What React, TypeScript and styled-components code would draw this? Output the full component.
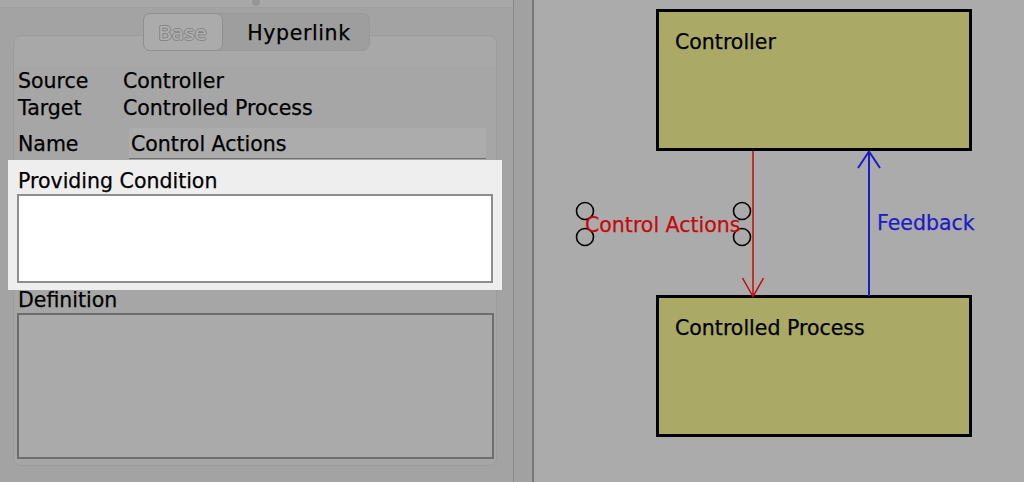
import React from 'react';
import styled, { createGlobalStyle } from 'styled-components';

const GlobalStyle = createGlobalStyle`
  html, body {
    margin: 0;
    padding: 0;
    background: #a3a3a3;
  }
  body {
    font-family: "DejaVu Sans", "Liberation Sans", sans-serif;
    font-size: 20.5px;
    color: #000;
    -webkit-text-stroke: 0.25px currentColor;
  }
`;

const Window = styled.div`
  display: flex;
  width: 1024px;
  height: 482px;
  overflow: hidden;
`;

const Inspector = styled.div`
  width: 513px;
  display: flex;
  flex-direction: column;
  background: #a3a3a3;
`;

const TopStrip = styled.div`
  height: 7px;
  background: #a8a8a8;
  border-bottom: 1px solid #9e9e9e;
  display: flex;
  justify-content: center;
  overflow: hidden;
`;

const Grip = styled.div`
  width: 8px;
  height: 8px;
  margin-top: -2px;
  margin-left: -2px;
  border-radius: 50%;
  background: #979797;
`;

const TabRow = styled.div`
  display: flex;
  justify-content: center;
  margin-top: 5px;
  margin-bottom: -16px;
  position: relative;
  z-index: 1;
`;

const Segmented = styled.div`
  display: flex;
  height: 38px;
  width: 227px;
  margin-left: -1px;
  border-radius: 8px;
  background: #9e9e9e;
  box-shadow: inset 0 0 0 1px #999;
`;

const Segment = styled.div<{ $selected?: boolean }>`
  display: flex;
  align-items: center;
  justify-content: center;
  height: 100%;
  box-sizing: border-box;
  width: ${p => (p.$selected ? '80px' : '147px')};
  border-radius: 7px;
  font-size: ${p => (p.$selected ? '20px' : '20.5px')};
  letter-spacing: ${p => (p.$selected ? '0' : '0.6px')};
  padding: ${p => (p.$selected ? '2px 0 0 0' : '2px 0 0 6px')};
  background: ${p => (p.$selected ? '#ababab' : 'transparent')};
  border: ${p => (p.$selected ? '1px solid #8f8f8f' : 'none')};
  color: ${p => (p.$selected ? '#b0b0b0' : '#000')};
  -webkit-text-stroke: ${p => (p.$selected ? '0' : '0.25px currentColor')};
  text-shadow: ${p => (p.$selected ? '0 1px 0 #858585, 0 -1px 0 #858585, 1px 0 0 #858585, -1px 0 0 #858585' : 'none')};
`;

const Panel = styled.div`
  margin-left: 13px;
  width: 484px;
  height: 431px;
  box-sizing: border-box;
  border: 1px solid #9c9c9c;
  border-radius: 8px;
  background: linear-gradient(#a8a8a8 0, #a8a8a8 30px, #a6a6a6 30px);
  padding: 32px 4px 0 4px;
  display: flex;
  flex-direction: column;
`;

const InfoRow = styled.div`
  display: flex;
  line-height: 27px;
  height: 27px;
`;

const Label = styled.span<{ $width: number }>`
  width: ${p => p.$width}px;
  flex-shrink: 0;
`;

const NameRow = styled.div`
  display: flex;
  margin-top: 6px;
  height: 31px;
  line-height: 29px;
  padding-top: 2px;
  box-sizing: border-box;
`;

const NameField = styled.div`
  flex: 1;
  margin-top: -2px;
  padding-top: 2px;
  margin-right: 6px;
  background: #acacac;
  border-bottom: 1px solid #6f6f6f;
  padding-left: 2px;
`;

const Highlight = styled.div`
  margin: 1px -10px 0 -10px;
  height: 130px;
  box-sizing: border-box;
  background: #eeeeee;
  padding: 11px 9px 7px 9px;
  display: flex;
  flex-direction: column;
`;

const FieldLabel = styled.div<{ $indent?: number }>`
  line-height: 20px;
  height: 20px;
  padding-left: ${p => p.$indent ?? 0}px;
`;

const TextArea = styled.div<{ $light?: boolean; $height: number }>`
  height: ${p => p.$height}px;
  box-sizing: border-box;
  margin-top: ${p => (p.$light ? 3 : 3)}px;
  background: ${p => (p.$light ? '#ffffff' : '#aaaaaa')};
  border: 2px solid ${p => (p.$light ? '#8d8d8d' : '#6e6e6e')};
`;

const DefinitionArea = styled(TextArea)`
  margin-left: -1px;
  margin-right: -2px;
`;

const Splitter = styled.div`
  width: 18px;
  background: #a1a1a1;
  border-left: 1px solid #8b8b8b;
  border-right: 2px solid #787878;
`;

const Canvas = styled.div`
  flex: 1;
  position: relative;
  background: #ababab;
`;

const Block = styled.div<{ $top: number }>`
  position: absolute;
  left: 122px;
  top: ${p => p.$top}px;
  width: 316px;
  height: 142px;
  box-sizing: border-box;
  background: #aaaa66;
  border: 3px solid #000;
  padding: 18px 0 0 16px;
  line-height: 24px;
  color: #000;
`;

const Wires = styled.svg`
  position: absolute;
  left: 0;
  top: 0;
  width: 100%;
  height: 100%;
  overflow: visible;
`;

const EdgeLabel = styled.div<{ $x: number; $y: number; $color: string }>`
  position: absolute;
  left: ${p => p.$x}px;
  top: ${p => p.$y}px;
  line-height: 24px;
  color: ${p => p.$color};
  white-space: nowrap;
`;

const RED = '#c40a0a';
const BLUE = '#1c1cc4';

export default function App() {
  return (
    <>
      <GlobalStyle />
      <Window>
        <Inspector>
          <TopStrip>
            <Grip />
          </TopStrip>
          <TabRow>
            <Segmented>
              <Segment $selected>Base</Segment>
              <Segment>Hyperlink</Segment>
            </Segmented>
          </TabRow>
          <Panel>
            <InfoRow>
              <Label $width={105}>Source</Label>
              <span>Controller</span>
            </InfoRow>
            <InfoRow>
              <Label $width={105}>Target</Label>
              <span>Controlled Process</span>
            </InfoRow>
            <NameRow>
              <Label $width={111}>Name</Label>
              <NameField>Control Actions</NameField>
            </NameRow>
            <Highlight>
              <FieldLabel $indent={1}>Providing Condition</FieldLabel>
              <TextArea $light $height={89} />
            </Highlight>
            <FieldLabel>Definition</FieldLabel>
            <DefinitionArea $height={146} />
          </Panel>
        </Inspector>
        <Splitter />
        <Canvas>
          <Block $top={9}>Controller</Block>
          <Block $top={295}>Controlled Process</Block>
          <Wires>
            <line x1="219" y1="151" x2="219" y2="296" stroke={RED} strokeWidth="1.5" />
            <polyline points="208.5,278 219,296.5 229.5,278" fill="none" stroke={RED} strokeWidth="1.5" />
            <line x1="335" y1="296" x2="335" y2="152" stroke={BLUE} strokeWidth="2" />
            <polyline points="324,168 335,151.5 346,168" fill="none" stroke={BLUE} strokeWidth="2" />
            <circle cx="51" cy="211" r="8.5" fill="none" stroke="#000" strokeWidth="1.6" />
            <circle cx="51" cy="237" r="8.5" fill="none" stroke="#000" strokeWidth="1.6" />
            <circle cx="208" cy="211" r="8.5" fill="none" stroke="#000" strokeWidth="1.6" />
            <circle cx="208" cy="237" r="8.5" fill="none" stroke="#000" strokeWidth="1.6" />
          </Wires>
          <EdgeLabel $x={51} $y={213} $color={RED}>Control Actions</EdgeLabel>
          <EdgeLabel $x={343} $y={211} $color={BLUE}>Feedback</EdgeLabel>
        </Canvas>
      </Window>
    </>
  );
}
